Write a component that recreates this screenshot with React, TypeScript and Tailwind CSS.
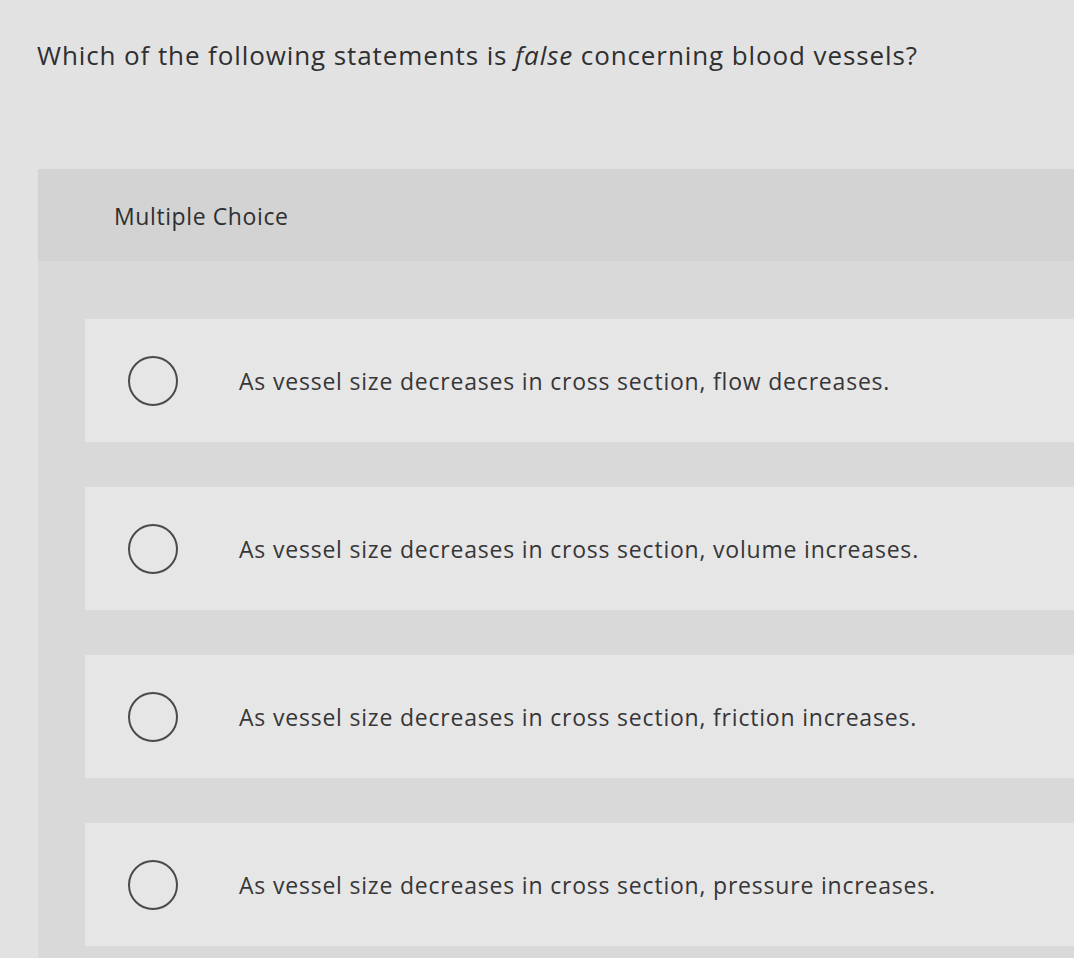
const options = [
  'As vessel size decreases in cross section, flow decreases.',
  'As vessel size decreases in cross section, volume increases.',
  'As vessel size decreases in cross section, friction increases.',
  'As vessel size decreases in cross section, pressure increases.',
];

function Radio() {
  return (
    <span className="block w-[50px] h-[50px] rounded-full border-2 border-[#4a4a4e] shrink-0" />
  );
}

export default function App() {
  return (
    <div
      className="w-[1074px] h-[958px] overflow-hidden bg-[#e2e2e2] text-[#2f2f31]"
      style={{ fontFamily: '"Open Sans", Lato, Arial, sans-serif' }}
    >
      <h1 className="pl-[37px] pt-[38px] text-[26px] leading-[34px] font-normal tracking-[0.9px]">
        Which of the following statements is <em>false</em> concerning blood vessels?
      </h1>

      <div className="ml-[38px] mt-[97px] bg-[#d9d9d9]">
        <div className="h-[92px] bg-[#d3d3d3] pl-[76px] pt-[3px] flex items-center text-[23px] tracking-[0.6px]">
          Multiple Choice
        </div>

        <div className="pl-[47px] pt-[58px] pb-[12px] flex flex-col gap-[45px]">
          {options.map((text) => (
            <label
              key={text}
              className="h-[123px] bg-[#e6e6e6] flex items-center pl-[43px] text-[23px] text-[#363638] tracking-[0.8px]"
            >
              <Radio />
              <span className="ml-[61px] pt-[2px]">{text}</span>
            </label>
          ))}
        </div>
      </div>
    </div>
  );
}
